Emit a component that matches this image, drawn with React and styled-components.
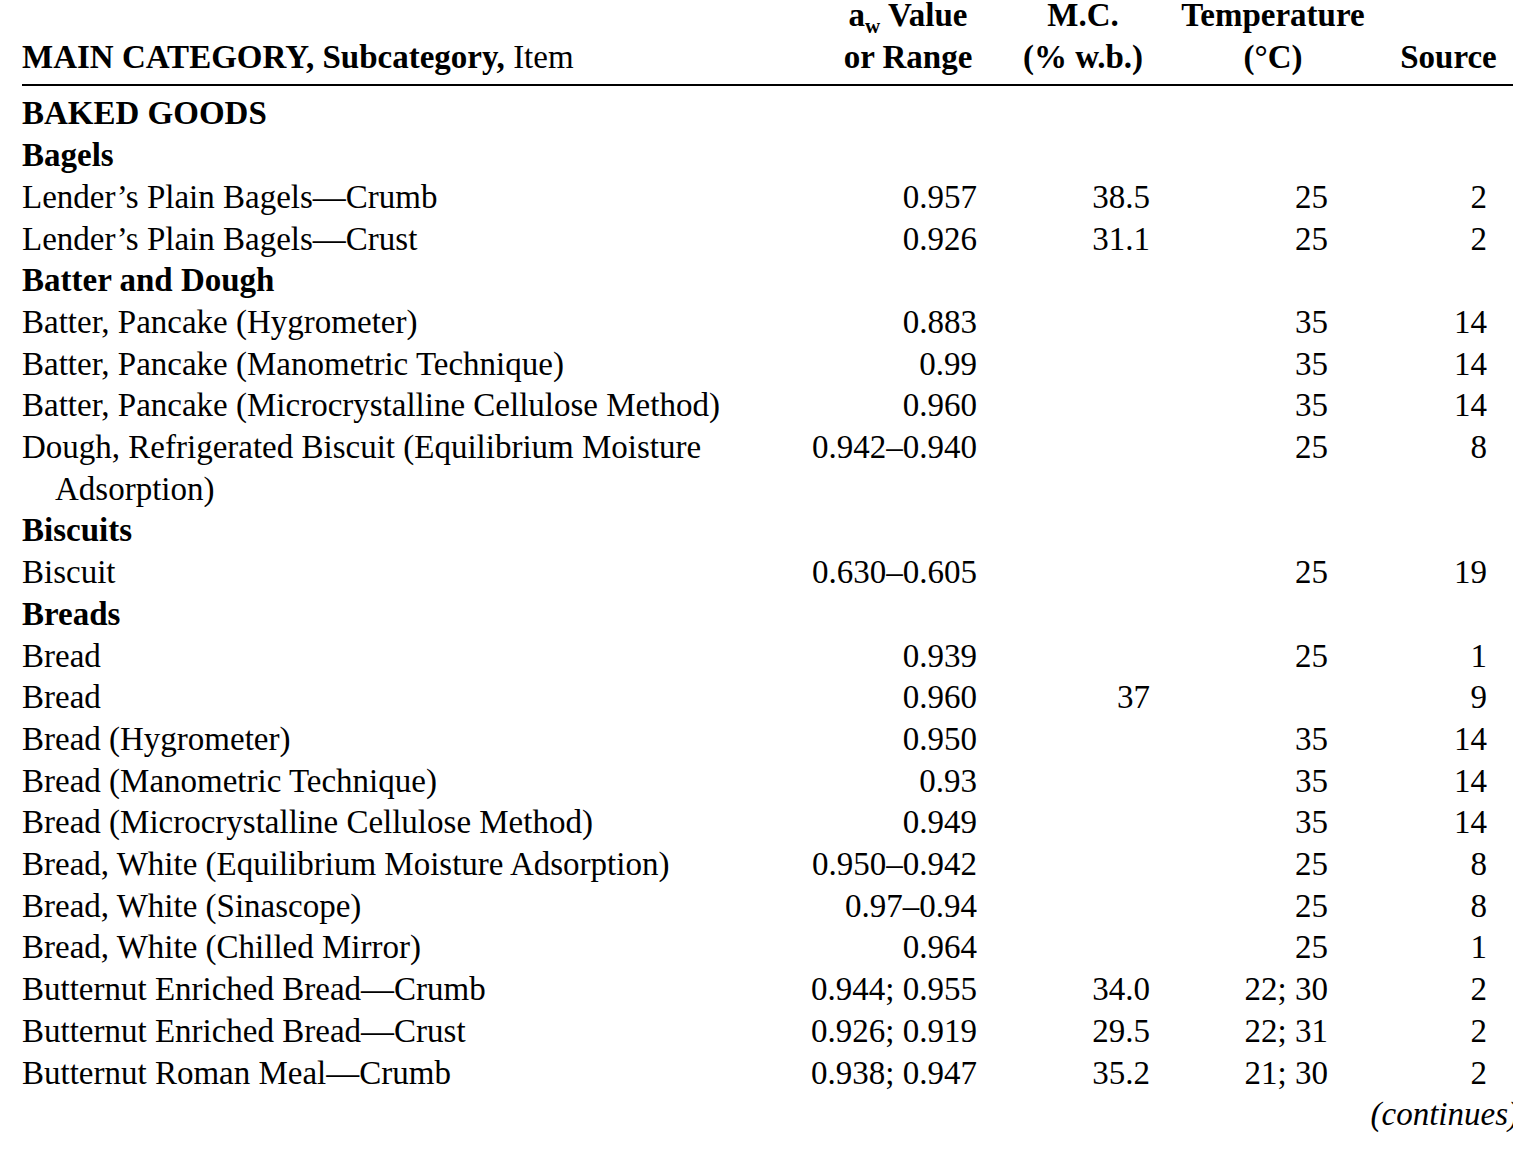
import React from "react";
import styled, { createGlobalStyle } from "styled-components";

const Global = createGlobalStyle`
  html, body {
    margin: 0;
    padding: 0;
    background: #ffffff;
    overflow: hidden;
  }
  body {
    font-family: "Liberation Serif", "Times New Roman", serif;
    color: #000000;
  }
`;

const Page = styled.div`
  width: 1497px;
  padding-left: 22px;
  margin-top: -5px;
  font-size: 33px;
  line-height: 41.7px;
`;

const HeaderGrid = styled.div`
  display: grid;
  grid-template-columns: 796px 180px 170px 210px 141px;
  align-items: end;
  padding-bottom: 6px;
  border-bottom: 2px solid #000;
`;

const HeadCell = styled.div`
  font-weight: bold;
  text-align: ${(p) => (p.$left ? "left" : "center")};
  white-space: nowrap;
`;

const Light = styled.span`
  font-weight: normal;
`;

const Sub = styled.sub`
  font-size: 21px;
  line-height: 0;
  vertical-align: -7px;
`;

const Body = styled.div`
  padding-top: 7px;
`;

const Row = styled.div`
  display: grid;
  grid-template-columns: 778px 198px 170px 210px 141px;
`;

const Heading = styled.div`
  font-weight: bold;
  grid-column: 1 / -1;
`;

const ItemCell = styled.div`
  padding-left: 33px;
  text-indent: -33px;
`;

const NumCell = styled.div`
  text-align: right;
  white-space: nowrap;
  padding-right: ${(p) => p.$pr}px;
`;

const Continues = styled.div`
  text-align: right;
  font-style: italic;
`;

const rows = [
  { h: "BAKED GOODS" },
  { h: "Bagels" },
  ["Lender\u2019s Plain Bagels\u2014Crumb", "0.957", "38.5", "25", "2"],
  ["Lender\u2019s Plain Bagels\u2014Crust", "0.926", "31.1", "25", "2"],
  { h: "Batter and Dough" },
  ["Batter, Pancake (Hygrometer)", "0.883", "", "35", "14"],
  ["Batter, Pancake (Manometric Technique)", "0.99", "", "35", "14"],
  ["Batter, Pancake (Microcrystalline Cellulose Method)", "0.960", "", "35", "14"],
  ["Dough, Refrigerated Biscuit (Equilibrium Moisture Adsorption)", "0.942\u20130.940", "", "25", "8"],
  { h: "Biscuits" },
  ["Biscuit", "0.630\u20130.605", "", "25", "19"],
  { h: "Breads" },
  ["Bread", "0.939", "", "25", "1"],
  ["Bread", "0.960", "37", "", "9"],
  ["Bread (Hygrometer)", "0.950", "", "35", "14"],
  ["Bread (Manometric Technique)", "0.93", "", "35", "14"],
  ["Bread (Microcrystalline Cellulose Method)", "0.949", "", "35", "14"],
  ["Bread, White (Equilibrium Moisture Adsorption)", "0.950\u20130.942", "", "25", "8"],
  ["Bread, White (Sinascope)", "0.97\u20130.94", "", "25", "8"],
  ["Bread, White (Chilled Mirror)", "0.964", "", "25", "1"],
  ["Butternut Enriched Bread\u2014Crumb", "0.944; 0.955", "34.0", "22; 30", "2"],
  ["Butternut Enriched Bread\u2014Crust", "0.926; 0.919", "29.5", "22; 31", "2"],
  ["Butternut Roman Meal\u2014Crumb", "0.938; 0.947", "35.2", "21; 30", "2"],
];

const pads = [21, 18, 50, 32];

export default function App() {
  return (
    <>
      <Global />
      <Page>
        <HeaderGrid>
          <HeadCell $left>
            MAIN CATEGORY, Subcategory, <Light>Item</Light>
          </HeadCell>
          <HeadCell>
            a<Sub>w</Sub> Value
            <br />
            or Range
          </HeadCell>
          <HeadCell>
            M.C.
            <br />
            (% w.b.)
          </HeadCell>
          <HeadCell>
            Temperature
            <br />
            (°C)
          </HeadCell>
          <HeadCell>Source</HeadCell>
        </HeaderGrid>
        <Body>
          {rows.map((r, i) =>
            r.h ? (
              <Row key={i}>
                <Heading>{r.h}</Heading>
              </Row>
            ) : (
              <Row key={i}>
                <ItemCell>{r[0]}</ItemCell>
                {r.slice(1).map((v, j) => (
                  <NumCell key={j} $pr={pads[j]}>
                    {v}
                  </NumCell>
                ))}
              </Row>
            )
          )}
          <Continues>(continues)</Continues>
        </Body>
      </Page>
    </>
  );
}
